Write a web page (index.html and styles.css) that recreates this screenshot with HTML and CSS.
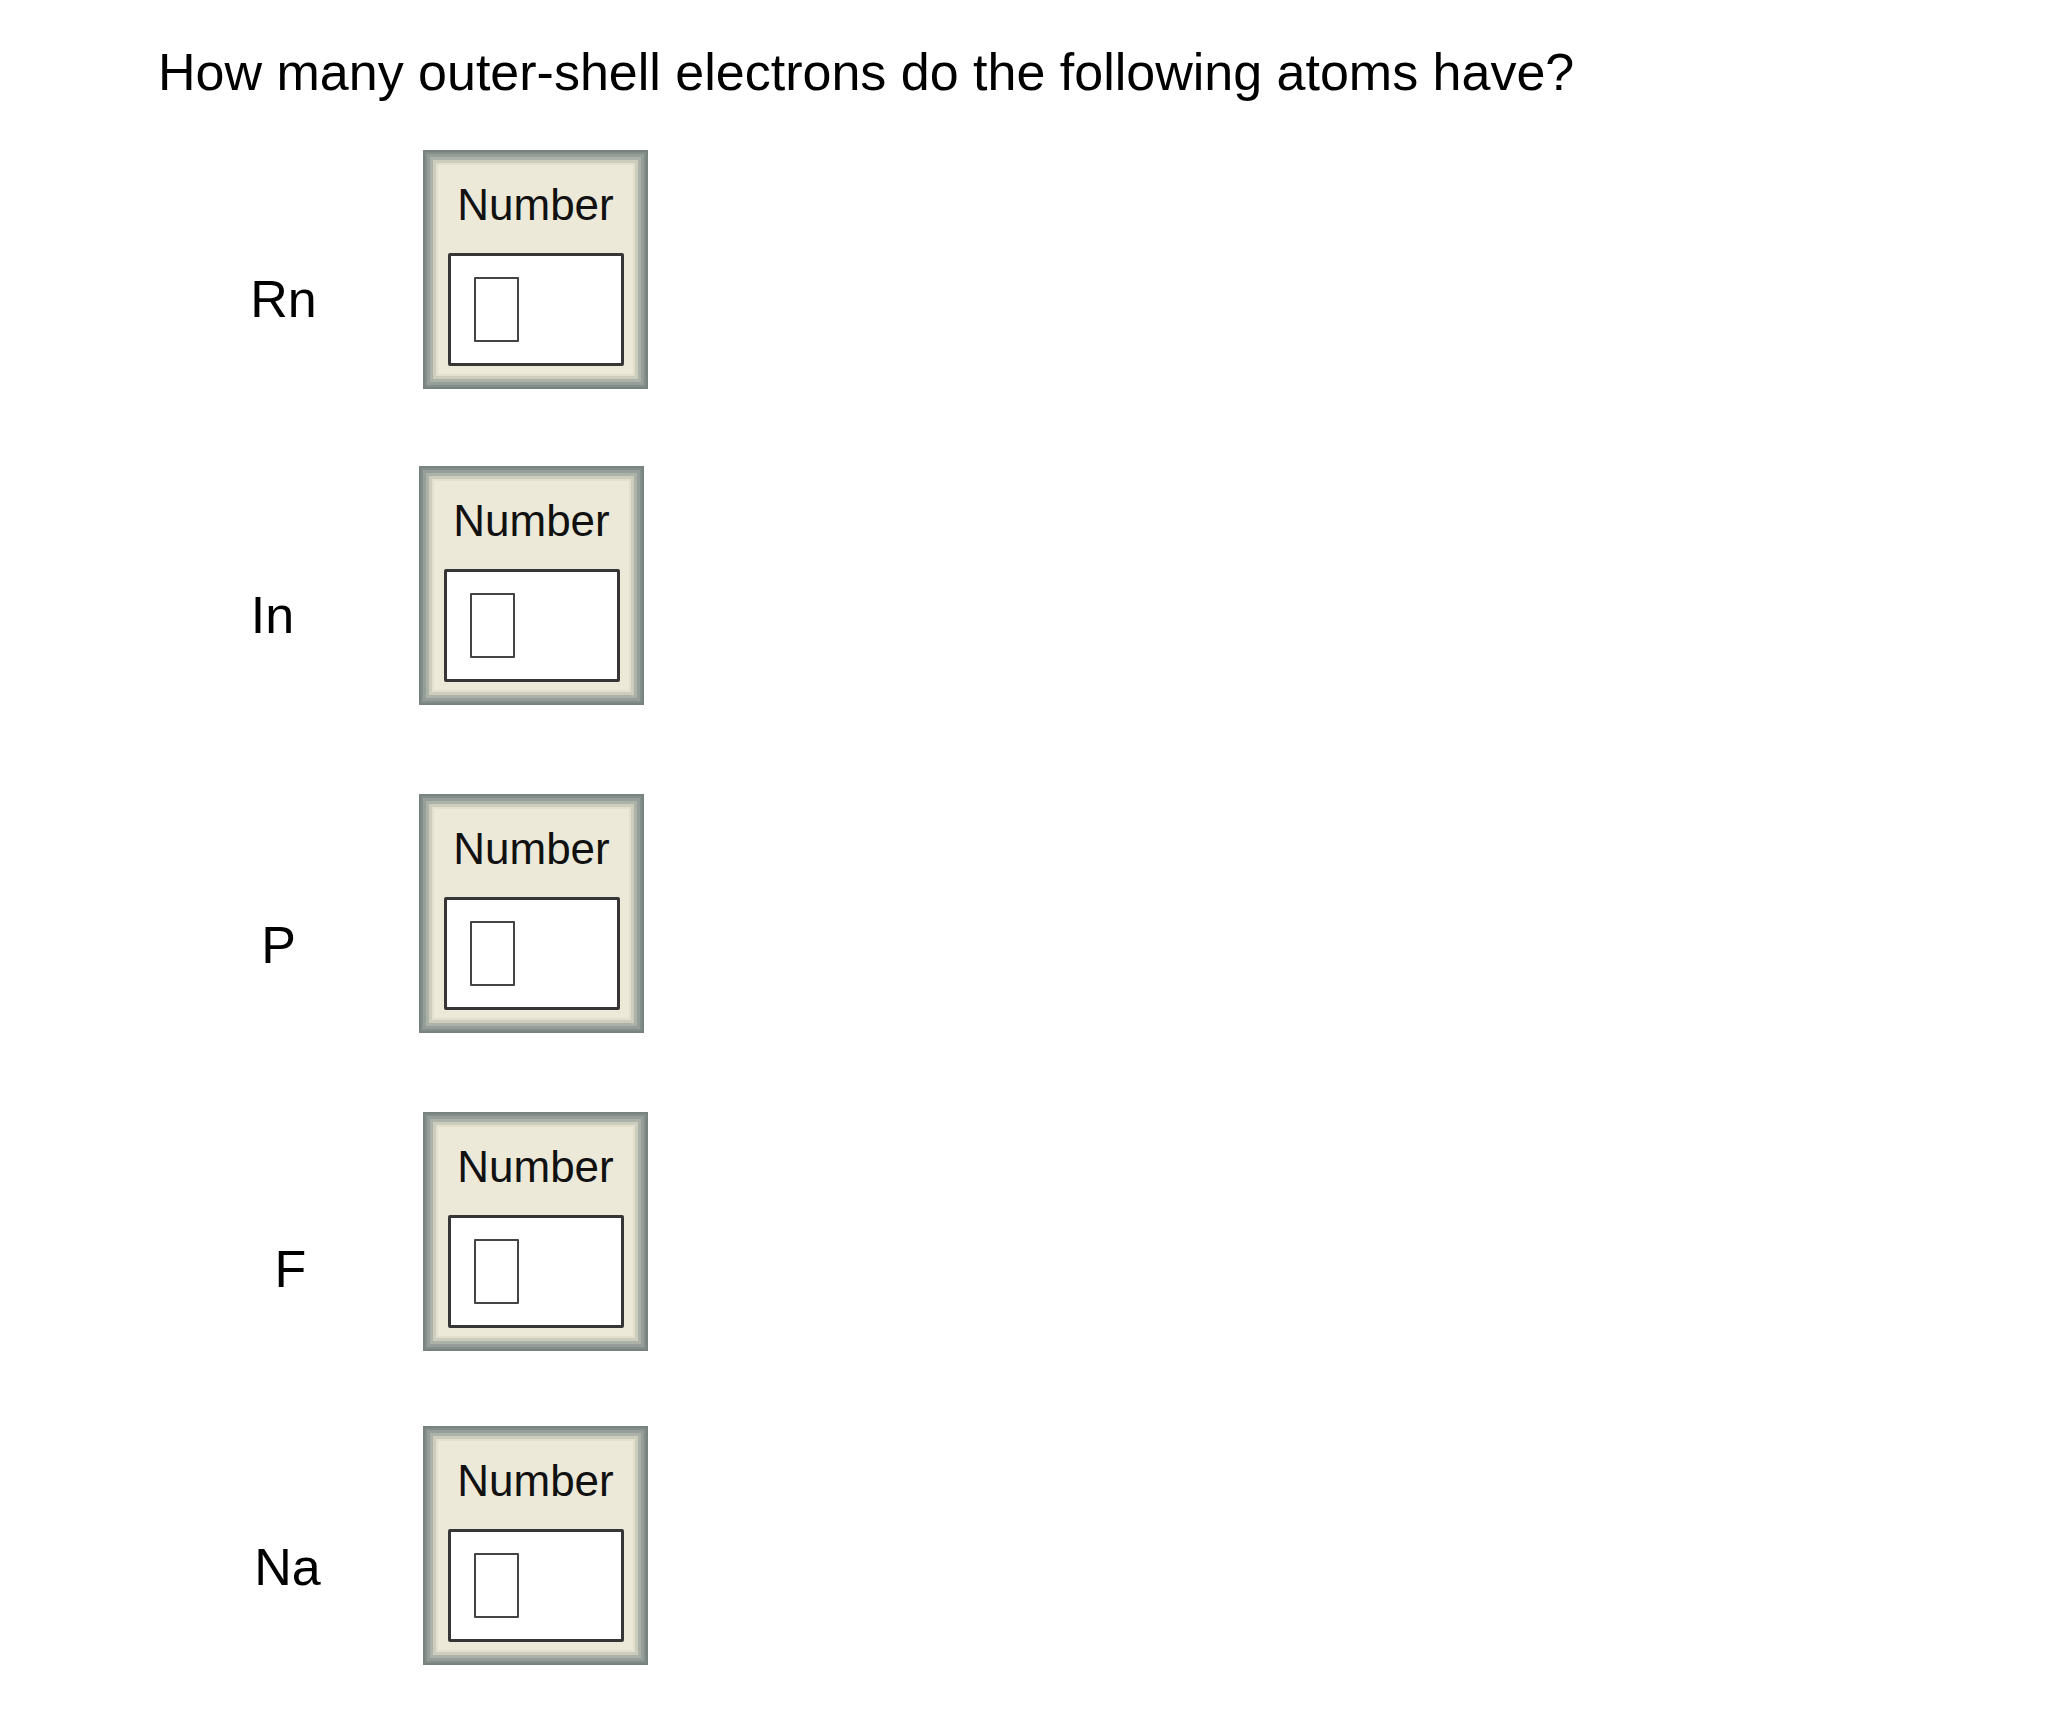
FILE: index.html
```html
<!DOCTYPE html>
<html lang="en" dir="ltr">
  <head>
    <meta charset="utf-8">
    <title>Outer-shell electrons</title>
    <link rel="stylesheet" href="styles.css">
  </head>
  <body>
    <div class="pergunta">
      <p class="enunciado">How many outer-shell electrons do the following atoms have?</p>

      <div class="linhas">
        <div class="linha rn">
          <span class="simbolo">Rn</span>
          <div class="campo">
            <p class="rotulo">Number</p>
            <div class="entrada"><span class="cursor"></span></div>
          </div>
        </div>

        <div class="linha in estreita">
          <span class="simbolo">In</span>
          <div class="campo">
            <p class="rotulo">Number</p>
            <div class="entrada"><span class="cursor"></span></div>
          </div>
        </div>

        <div class="linha p estreita">
          <span class="simbolo">P</span>
          <div class="campo">
            <p class="rotulo">Number</p>
            <div class="entrada"><span class="cursor"></span></div>
          </div>
        </div>

        <div class="linha f">
          <span class="simbolo">F</span>
          <div class="campo">
            <p class="rotulo">Number</p>
            <div class="entrada"><span class="cursor"></span></div>
          </div>
        </div>

        <div class="linha na">
          <span class="simbolo">Na</span>
          <div class="campo">
            <p class="rotulo">Number</p>
            <div class="entrada"><span class="cursor"></span></div>
          </div>
        </div>
      </div>
    </div>
  </body>
</html>
```

FILE: styles.css
```css
* {
  margin: 0;
  font-family: "Liberation Sans", Arial, sans-serif;
}

body {
  background: #fff;
  color: #000;
}

.pergunta {
  padding: 43px 0 0 158px;
}

.enunciado {
  font-size: 52px;
  line-height: 58px;
}

.linhas {
  display: flex;
  flex-direction: column;
  gap: 75px;
  margin-top: 49px;
}

.linha {
  display: flex;
  align-items: flex-start;
}

.simbolo {
  width: 265px;
  box-sizing: border-box;
  padding-top: 120px;
  text-align: center;
  font-size: 52px;
  line-height: 58px;
}

.estreita .simbolo {
  width: 261px;
}

/* cada linha tem um pequeno desvio no original */
.rn .simbolo { padding-right: 14px; }
.in { margin-top: 2px; }
.in .simbolo { padding-right: 32px; }
.p { margin-top: 14px; }
.p .simbolo { padding-top: 122px; padding-right: 20px; }
.f { margin-top: 4px; }
.f .simbolo { padding-top: 128px; }
.na .simbolo { padding-top: 112px; padding-right: 6px; }

.campo {
  width: 225px;
  height: 239px;
  box-sizing: border-box;
  padding: 28px 0 0;
  display: flex;
  flex-direction: column;
  align-items: center;
  background: #ece9d9;
  border: 2px solid #78827e;
  box-shadow:
    inset 0 0 0 2px #838d89,
    inset 0 0 0 5px #959e99,
    inset 0 0 0 8px #adb2a9,
    inset 0 0 0 11px #cdcdbd,
    inset 0 0 0 13px #e2dfcf;
}

.rotulo {
  font-size: 44px;
  line-height: 49px;
  color: #111;
}

.entrada {
  width: 176px;
  height: 113px;
  box-sizing: border-box;
  margin-top: 24px;
  padding: 21px 0 0 23px;
  background: #fff;
  border: 3px solid #363636;
  border-radius: 2px;
}

.cursor {
  display: block;
  width: 45px;
  height: 65px;
  box-sizing: border-box;
  border: 2px solid #444;
  border-radius: 1px;
}
```
